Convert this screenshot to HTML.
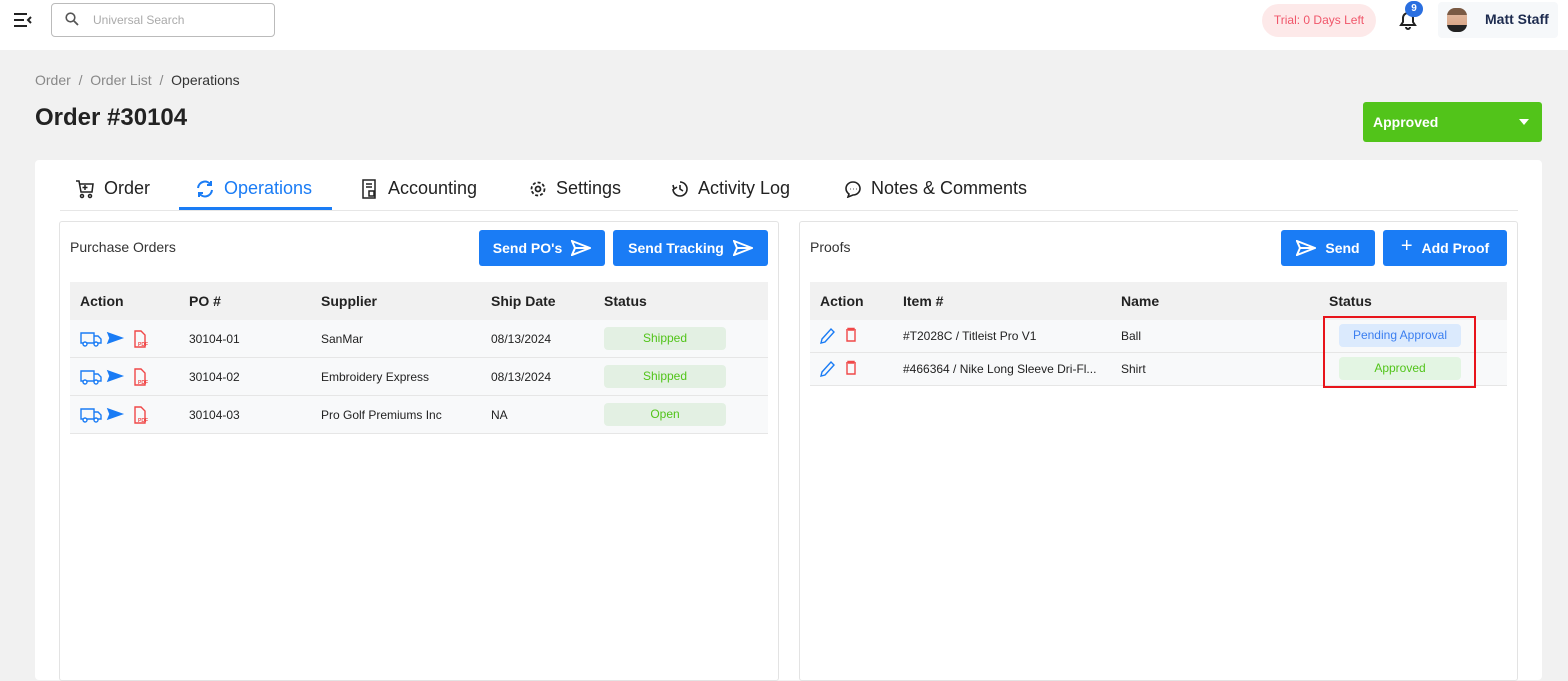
<!DOCTYPE html>
<html><head><meta charset="utf-8"><style>
*{box-sizing:border-box;margin:0;padding:0}
body{width:1568px;height:672px;overflow:hidden;background:#f1f1f1;font-family:"Liberation Sans",sans-serif;color:#222;position:relative}
.abs{position:absolute}
.hdr{left:0;top:0;width:1568px;height:50px;background:#fff}
.search{left:51px;top:3px;width:224px;height:34px;border:1px solid #bbb;border-radius:4px;font-size:12px;color:#aaa;padding:9px 0 0 41px}
.card{left:35px;top:160px;width:1507px;height:520px;background:#fff;border-radius:4px}
.tab{top:178px;font-size:18px;color:#222;display:flex;align-items:center;gap:9px}
.panel{top:221px;height:460px;background:#fff;border:1px solid #e3e3e3;border-radius:3px}
.btn{background:#1a7cf5;color:#fff;border-radius:3px;font-size:14px;font-weight:bold;display:flex;align-items:center;justify-content:center;gap:9px;height:36px;top:230px}
.th{background:#f1f1f1;height:38px;top:282px;font-size:14px;font-weight:bold}
.row{background:#f8f9fa;border-bottom:1px solid #e6e6e6;font-size:12px}
.badge{border-radius:4px;font-size:12px;text-align:center;height:23px;line-height:23px}
.t{position:absolute;white-space:nowrap}
</style></head><body>
<div class="abs hdr"></div>
<svg class="abs" style="left:13px;top:12px" width="20" height="16" viewBox="0 0 20 16"><path d="M1 2h13M1 8h10M1 14h13M18 5l-3 3 3 3" stroke="#222" stroke-width="2" fill="none"/></svg>
<div class="abs search">Universal Search</div>
<svg class="abs" style="left:65px;top:12px" width="14" height="14" viewBox="0 0 14 14"><circle cx="5.5" cy="5.5" r="4.3" stroke="#555" stroke-width="1.6" fill="none"/><path d="M9 9l4 4" stroke="#555" stroke-width="1.8"/></svg>
<div class="abs" style="left:1262px;top:4px;width:114px;height:33px;background:#fde9e9;border-radius:17px;color:#f0566a;font-size:12px;text-align:center;line-height:33px">Trial: 0 Days Left</div>
<svg class="abs" style="left:1397px;top:9px" width="22" height="22" viewBox="0 0 22 22"><path d="M4 16h14l-2-3V9a5 5 0 0 0-10 0v4z M9 18a2 2 0 0 0 4 0" stroke="#222" stroke-width="2" fill="none"/></svg>
<div class="abs" style="left:1405px;top:1px;width:18px;height:16px;border-radius:8px;background:#2a6fe0;color:#fff;font-size:10px;font-weight:bold;text-align:center;line-height:16px">9</div>
<div class="abs" style="left:1438px;top:2px;width:120px;height:36px;background:#f6f8fa;border-radius:4px"></div>
<div class="abs" style="left:1447px;top:8px;width:20px;height:24px;border-radius:8px;background:linear-gradient(#7a5a44 30%,#e0b59a 30%,#d9a88a 70%,#222 70%)"></div>
<div class="t" style="left:1485px;top:11px;font-size:14px;font-weight:bold;color:#1d2b4f">Matt Staff</div>

<div class="t" style="left:35px;top:72px;font-size:14px;color:#888">Order &nbsp;/ &nbsp;Order List &nbsp;/ &nbsp;<span style="color:#333">Operations</span></div>
<div class="t" style="left:35px;top:104px;font-size:24px;font-weight:bold;color:#222">Order #30104</div>
<div class="abs" style="left:1363px;top:102px;width:179px;height:40px;background:#52c41a;border-radius:3px;color:#fff;font-size:14px;font-weight:bold;padding:12px 0 0 10px">Approved</div>
<svg class="abs" style="left:1519px;top:119px" width="10" height="6"><path d="M0 0h10L5 6z" fill="#fff"/></svg>

<div class="abs card"></div>
<div class="abs" style="left:60px;top:210px;width:1458px;height:1px;background:#e6e6e6"></div>
<div class="abs" style="left:179px;top:207px;width:153px;height:3px;background:#1a7cf5"></div>
<div class="abs tab" style="left:75px"><svg width="20" height="20" viewBox="0 0 20 20" fill="none" stroke="#222" stroke-width="1.5"><path d="M1 2h3l2 11h11l1-8H5M10 6v5M7.5 8.5h5"/><circle cx="7" cy="17" r="1.5"/><circle cx="15" cy="17" r="1.5"/></svg>Order</div>
<div class="abs tab" style="left:195px;color:#1a7cf5"><svg width="20" height="20" viewBox="0 0 20 20" fill="none" stroke="#1a7cf5" stroke-width="2"><path d="M3 9a7 7 0 0 1 13-3M17 11a7 7 0 0 1-13 3M16 2v4h-4M4 18v-4h4"/></svg>Operations</div>
<div class="abs tab" style="left:361px"><svg width="18" height="20" viewBox="0 0 18 20" fill="none" stroke="#222" stroke-width="1.5"><path d="M2 1h12v18H2zM5 5h6M5 8h6"/><rect x="8" y="12" width="5" height="5"/></svg>Accounting</div>
<div class="abs tab" style="left:529px"><svg width="18" height="18" viewBox="0 0 18 18" fill="none" stroke="#222" stroke-width="1.8"><circle cx="9" cy="9" r="2.5"/><circle cx="9" cy="9" r="6.5" stroke-dasharray="3 2"/></svg>Settings</div>
<div class="abs tab" style="left:671px"><svg width="18" height="18" viewBox="0 0 18 18" fill="none" stroke="#222" stroke-width="1.6"><path d="M9 2a7 7 0 1 1-7 7M9 5v4l3 2M2 5l1 4 3-2"/></svg>Activity Log</div>
<div class="abs tab" style="left:844px"><svg width="18" height="18" viewBox="0 0 18 18" fill="none" stroke="#222" stroke-width="1.6"><path d="M9 2c4 0 7 3 7 6.5S13 15 9 15l-5 2 1-3c-2-1.5-3-3.5-3-5.5C2 5 5 2 9 2zM6 9h.5M9 9h.5M12 9h.5"/></svg>Notes &amp; Comments</div>

<!-- left panel -->
<div class="abs panel" style="left:59px;width:720px"></div>
<div class="t" style="left:70px;top:239px;font-size:14px;color:#333">Purchase Orders</div>
<div class="abs btn" style="left:479px;width:126px">Send PO's <svg width="20" height="16" viewBox="0 0 20 16" fill="none" stroke="#fff" stroke-width="2"><path d="M1 1l18 7-18 7 3-7zM4 8h15"/></svg></div>
<div class="abs btn" style="left:613px;width:155px">Send Tracking <svg width="20" height="16" viewBox="0 0 20 16" fill="none" stroke="#fff" stroke-width="2"><path d="M1 1l18 7-18 7 3-7zM4 8h15"/></svg></div>
<div class="abs th" style="left:70px;width:698px"><span class="t" style="left:10px;top:11px">Action</span><span class="t" style="left:119px;top:11px">PO #</span><span class="t" style="left:251px;top:11px">Supplier</span><span class="t" style="left:421px;top:11px">Ship Date</span><span class="t" style="left:534px;top:11px">Status</span></div>
<div id="rows"></div>

<!-- right panel -->
<div class="abs panel" style="left:799px;width:719px"></div>
<div class="t" style="left:810px;top:239px;font-size:14px;color:#333">Proofs</div>
<div class="abs btn" style="left:1281px;width:94px"><svg width="20" height="16" viewBox="0 0 20 16" fill="none" stroke="#fff" stroke-width="2"><path d="M1 1l18 7-18 7 3-7zM4 8h15"/></svg>Send</div>
<div class="abs btn" style="left:1383px;width:124px"><span style="font-size:20px;font-weight:normal;margin-top:-3px">+</span> Add Proof</div>
<div class="abs th" style="left:810px;width:697px"><span class="t" style="left:10px;top:11px">Action</span><span class="t" style="left:93px;top:11px">Item #</span><span class="t" style="left:311px;top:11px">Name</span><span class="t" style="left:519px;top:11px">Status</span></div>
<div class="abs row" style="left:810px;top:320px;width:697px;height:33px"><span class="t" style="left:93px;top:9px">#T2028C / Titleist Pro V1</span><span class="t" style="left:311px;top:9px">Ball</span><div class="abs badge" style="left:529px;top:4px;width:122px;background:#dbeafd;color:#3a7ef0">Pending Approval</div></div>
<div class="abs row" style="left:810px;top:353px;width:697px;height:33px"><span class="t" style="left:93px;top:9px">#466364 / Nike Long Sleeve Dri-Fl...</span><span class="t" style="left:311px;top:9px">Shirt</span><div class="abs badge" style="left:529px;top:4px;width:122px;background:#e3f5e3;color:#52c41a">Approved</div></div>
<svg class="abs" style="left:819px;top:327px" width="40" height="52" viewBox="0 0 40 52" fill="none" stroke-width="1.4"><g stroke="#1a7cf5"><path d="M2 16l1-4 9-10 3 3-9 10z"/><path d="M2 49l1-4 9-10 3 3-9 10z"/></g><g stroke="#f04848"><path d="M27 3h10M29 3v-1.5h6V3M28 4v10h8V4"/><path d="M27 36h10M29 36v-1.5h6V36M28 37v10h8V37"/></g></svg>
<div class="abs" style="left:1323px;top:316px;width:153px;height:72px;border:2px solid #e8141b"></div>
<script>
var d=[["30104-01","SanMar","08/13/2024","Shipped"],["30104-02","Embroidery Express","08/13/2024","Shipped"],["30104-03","Pro Golf Premiums Inc","NA","Open"]],h="";
d.forEach(function(r,i){var y=320+i*38;
h+='<div class="abs row" style="left:70px;top:'+y+'px;width:698px;height:38px"><svg class="abs" style="left:10px;top:10px" width="72" height="18" viewBox="0 0 72 18" fill="none" stroke-width="1.4"><g stroke="#1a7cf5"><path d="M1 3h13v10H1zM14 6h4l3 3v4h-7"/><circle cx="5" cy="14" r="2" fill="#fff"/><circle cx="16" cy="14" r="2" fill="#fff"/><path d="M28 3l14 5-14 5 2-5zM30 8h12" fill="#1a7cf5"/></g><g stroke="#f04848"><path d="M55 1h6l4 4v12H55z"/></g><text x="58" y="16" font-size="5" fill="#f04848" font-family="Liberation Sans" font-weight="bold">PDF</text></svg><span class="t" style="left:119px;top:12px">'+r[0]+'</span><span class="t" style="left:251px;top:12px">'+r[1]+'</span><span class="t" style="left:421px;top:12px">'+r[2]+'</span><div class="abs badge" style="left:534px;top:7px;width:122px;background:#e3f0e3;color:#52c41a">'+r[3]+'</div></div>';});
document.getElementById("rows").innerHTML=h;
</script>
</body></html>
